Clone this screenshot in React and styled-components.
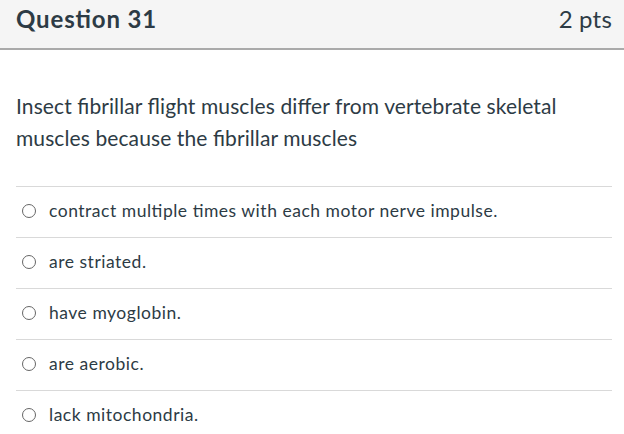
import React from "react";
import styled, { createGlobalStyle } from "styled-components";

const Global = createGlobalStyle`
  html, body { margin: 0; padding: 0; background: #fff; }
  body {
    font-family: Lato, "Open Sans", sans-serif;
    color: #2d3b45;
    font-feature-settings: "liga" 1;
    font-variant-ligatures: common-ligatures;
  }
`;

const Page = styled.div`
  width: 624px;
  height: 434px;
  overflow: hidden;
`;

const Header = styled.div`
  height: 50px;
  box-sizing: border-box;
  background: #f5f5f5;
  border-bottom: 2px solid #aaaaaa;
  display: flex;
  justify-content: space-between;
  align-items: flex-start;
  padding: 4px 12px 0 16px;
`;

const Title = styled.div`
  font-size: 24px;
  font-weight: 700;
  letter-spacing: 0.85px;
  line-height: 30px;
  color: #2d3b45;
`;

const Points = styled.div`
  font-size: 24px;
  font-weight: 400;
  letter-spacing: 0.2px;
  line-height: 30px;
  color: #2d3b45;
`;

const QuestionText = styled.p`
  margin: 0;
  padding: 40px 16px 0 16px;
  font-size: 21px;
  letter-spacing: 0.1px;
  line-height: 32px;
  color: #2d3b45;
`;

const Answers = styled.div`
  margin: 32px 12px 0 16px;
`;

const Answer = styled.label`
  display: flex;
  align-items: center;
  height: 51px;
  box-sizing: border-box;
  border-top: 1px solid #d9d9d9;
  font-size: 17.5px;
  letter-spacing: 0.52px;
  line-height: 24px;
  padding-bottom: 2px;
  color: #2d3b45;
`;

const Radio = styled.span`
  width: 14px;
  height: 14px;
  box-sizing: border-box;
  border: 1.7px solid #666666;
  border-radius: 50%;
  margin: 0 13px 0 6px;
  flex: none;
`;

const options = [
  "contract multiple times with each motor nerve impulse.",
  "are striated.",
  "have myoglobin.",
  "are aerobic.",
  "lack mitochondria.",
];

export default function App() {
  return (
    <Page>
      <Global />
      <Header>
        <Title>Question 31</Title>
        <Points>2 pts</Points>
      </Header>
      <QuestionText>
        Insect fibrillar flight muscles differ from vertebrate skeletal muscles because the fibrillar muscles
      </QuestionText>
      <Answers>
        {options.map((o) => (
          <Answer key={o}>
            <Radio />
            {o}
          </Answer>
        ))}
      </Answers>
    </Page>
  );
}
